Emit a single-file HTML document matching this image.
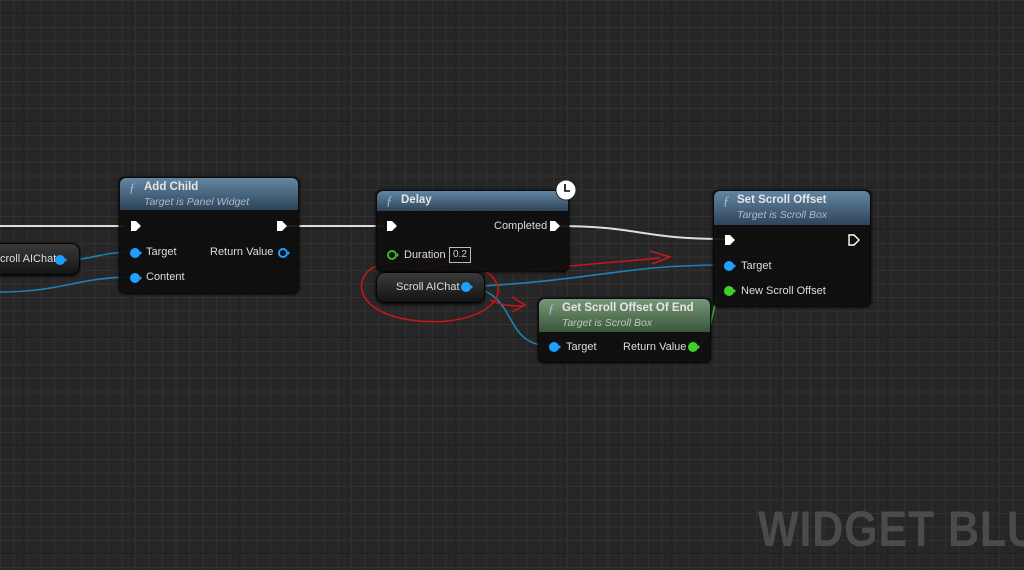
<!DOCTYPE html>
<html><head><style>
body{margin:0;width:1024px;height:570px;overflow:hidden;background:#262626;font-family:"Liberation Sans",sans-serif;position:relative;}
#bg{position:absolute;inset:0;background-color:#262626;
background-image:linear-gradient(#1e1e1e 1px,transparent 1px),linear-gradient(90deg,#222 1px,transparent 1px),linear-gradient(#313131 1px,transparent 1px),linear-gradient(90deg,#313131 1px,transparent 1px);
background-size:108px 108px,108px 108px,13.5px 13.5px,13.5px 13.5px;background-position:0 13px,23px 0,0 0,0 0;}
.node{position:absolute;background:rgba(14,14,14,.93);border-radius:6px;box-shadow:0 0 3px #000;border:1px solid #0a0a0a;}
.hd{position:absolute;left:0;right:0;top:0;border-radius:6px 6px 0 0;background:linear-gradient(#6386a3,#2e4458);}
.hd.g{background:linear-gradient(#78987a,#3b5538);}
.t{position:absolute;color:#e6e6e6;font-size:11.5px;font-weight:bold;white-space:nowrap;}
.s{position:absolute;color:#a9bccc;font-size:10.5px;font-style:italic;white-space:nowrap;}
.l{position:absolute;color:#ddd;font-size:11px;white-space:nowrap;}
.f{position:absolute;color:#9cc4e8;font-size:13px;font-style:italic;font-family:"Liberation Serif",serif;}
.var{position:absolute;border-radius:9px;background:linear-gradient(#3a3a3a,#141414);border:1px solid #050505;box-shadow:0 1px 3px #000;}
</style></head><body>
<div id="bg"></div>
<svg width="1024" height="570" style="position:absolute;left:0;top:0">
<g fill="none" stroke-width="2">
<path d="M0 226H125" stroke="#ddd"/>
<path d="M285 226H384" stroke="#ddd"/>
<path d="M556 226C640 226 640 239 725 239" stroke="#ddd"/>
<path d="M62 260C95 260 100 252 132 252" stroke="#1f7fb8" stroke-width="1.6"/>
<path d="M0 292C60 292 80 277 132 277" stroke="#1f7fb8" stroke-width="1.6"/>
<path d="M466 287C600 280 620 265 726 265" stroke="#1f7fb8" stroke-width="1.6"/>
<path d="M466 287C520 290 500 346 551 346" stroke="#1f7fb8" stroke-width="1.6"/>
<path d="M690 346C720 346 706 290 728 290" stroke="#3fb52a" stroke-width="1.6"/>
</g>
<g fill="none" stroke="#c8161a" stroke-width="1.5">
<path d="M482 268C455 258 400 258 372 268C352 282 358 312 410 320C470 328 505 305 497 284C490 268 468 262 440 265C425 266 412 270 402 274"/>
<path d="M517 272C560 266 620 262 660 258M650 251L670 257L652 264"/>
<path d="M490 300C500 305 510 306 522 306M512 297L525 305L512 312"/>
</g>
</svg>

<div class="var" style="left:-20px;top:243px;width:98px;height:30px"></div>
<div class="l" style="left:0;top:253px">croll AIChat</div>
<svg style="position:absolute;left:54px;top:254px" width="14" height="12"><circle cx="6" cy="6" r="5" fill="#1da0ff"/><path d="M11 4L13 6L11 8Z" fill="#1da0ff"/></svg>

<div class="node" style="left:119px;top:177px;width:178px;height:115px">
<div class="hd" style="height:32px"></div>
<div class="f" style="left:9px;top:2px">ƒ</div>
<div class="t" style="left:24px;top:3px">Add Child</div>
<div class="s" style="left:24px;top:18px">Target is Panel Widget</div>
<svg style="position:absolute;left:10px;top:42px" width="12" height="12"><path d="M1 1H6L11 6L6 11H1Z" fill="#fff"/></svg>
<svg style="position:absolute;left:156px;top:42px" width="12" height="12"><path d="M1 1H6L11 6L6 11H1Z" fill="#fff"/></svg>
<svg style="position:absolute;left:9px;top:69px" width="14" height="12"><circle cx="6" cy="6" r="5" fill="#1da0ff"/><path d="M11 4L13 6L11 8Z" fill="#1da0ff"/></svg>
<div class="l" style="left:26px;top:68px">Target</div>
<div class="l" style="left:90px;top:68px">Return Value</div>
<svg style="position:absolute;left:157px;top:69px" width="14" height="12"><circle cx="6" cy="6" r="4" fill="none" stroke="#1da0ff" stroke-width="2"/><path d="M11 4L13 6L11 8Z" fill="#1da0ff"/></svg>
<svg style="position:absolute;left:9px;top:94px" width="14" height="12"><circle cx="6" cy="6" r="5" fill="#1da0ff"/><path d="M11 4L13 6L11 8Z" fill="#1da0ff"/></svg>
<div class="l" style="left:26px;top:93px">Content</div>
</div>

<div class="node" style="left:376px;top:190px;width:191px;height:80px">
<div class="hd" style="height:20px"></div>
<div class="f" style="left:9px;top:2px">ƒ</div>
<div class="t" style="left:24px;top:3px">Delay</div>
<svg style="position:absolute;left:9px;top:29px" width="12" height="12"><path d="M1 1H6L11 6L6 11H1Z" fill="#fff"/></svg>
<div class="l" style="left:117px;top:29px">Completed</div>
<svg style="position:absolute;left:172px;top:29px" width="12" height="12"><path d="M1 1H6L11 6L6 11H1Z" fill="#fff"/></svg>
<svg style="position:absolute;left:9px;top:58px" width="14" height="12"><circle cx="6" cy="6" r="4" fill="none" stroke="#3fb52a" stroke-width="2"/><path d="M11 4L13 6L11 8Z" fill="#3fb52a"/></svg>
<div class="l" style="left:27px;top:58px">Duration</div>
<div style="position:absolute;left:72px;top:56px;width:20px;height:14px;border:1px solid #bbb;color:#ccc;font-size:10px;text-align:center;line-height:14px">0.2</div>
</div>
<svg style="position:absolute;left:555px;top:179px" width="22" height="22"><circle cx="11" cy="11" r="10" fill="#fff" stroke="#222"/><path d="M10 5V12H15" stroke="#000" stroke-width="1.6" fill="none"/></svg>

<div class="var" style="left:376px;top:272px;width:107px;height:29px"></div>
<div class="l" style="left:396px;top:281px">Scroll AIChat</div>
<svg style="position:absolute;left:460px;top:281px" width="14" height="12"><circle cx="6" cy="6" r="5" fill="#1da0ff"/><path d="M11 4L13 6L11 8Z" fill="#1da0ff"/></svg>

<div class="node" style="left:538px;top:298px;width:171px;height:63px">
<div class="hd g" style="height:33px"></div>
<div class="f" style="left:9px;top:2px">ƒ</div>
<div class="t" style="left:23px;top:3px">Get Scroll Offset Of End</div>
<div class="s" style="left:23px;top:18px;color:#b8ccb4">Target is Scroll Box</div>
<svg style="position:absolute;left:9px;top:42px" width="14" height="12"><circle cx="6" cy="6" r="5" fill="#1da0ff"/><path d="M11 4L13 6L11 8Z" fill="#1da0ff"/></svg>
<div class="l" style="left:27px;top:42px">Target</div>
<div class="l" style="left:84px;top:42px">Return Value</div>
<svg style="position:absolute;left:148px;top:42px" width="14" height="12"><circle cx="6" cy="6" r="5" fill="#3fd12a"/><path d="M11 4L13 6L11 8Z" fill="#3fd12a"/></svg>
</div>

<div class="node" style="left:713px;top:190px;width:156px;height:115px">
<div class="hd" style="height:34px"></div>
<div class="f" style="left:9px;top:2px">ƒ</div>
<div class="t" style="left:23px;top:3px">Set Scroll Offset</div>
<div class="s" style="left:23px;top:18px">Target is Scroll Box</div>
<svg style="position:absolute;left:10px;top:43px" width="12" height="12"><path d="M1 1H6L11 6L6 11H1Z" fill="#fff"/></svg>
<svg style="position:absolute;left:134px;top:43px" width="12" height="12"><path d="M1 1H6L11 6L6 11H1Z" fill="none" stroke="#fff" stroke-width="1.4"/></svg>
<svg style="position:absolute;left:9px;top:69px" width="14" height="12"><circle cx="6" cy="6" r="5" fill="#1da0ff"/><path d="M11 4L13 6L11 8Z" fill="#1da0ff"/></svg>
<div class="l" style="left:27px;top:69px">Target</div>
<svg style="position:absolute;left:9px;top:94px" width="14" height="12"><circle cx="6" cy="6" r="5" fill="#3fd12a"/><path d="M11 4L13 6L11 8Z" fill="#3fd12a"/></svg>
<div class="l" style="left:27px;top:94px">New Scroll Offset</div>
</div>

<div style="position:absolute;left:0;top:0;width:1024px;height:570px;overflow:hidden">
<div style="position:absolute;left:758px;top:500px;color:#4b4b4b;font-size:50px;font-weight:bold;white-space:nowrap;transform:scaleX(.86);transform-origin:left top;letter-spacing:1px">WIDGET BLU</div>
</div>
</body></html>
